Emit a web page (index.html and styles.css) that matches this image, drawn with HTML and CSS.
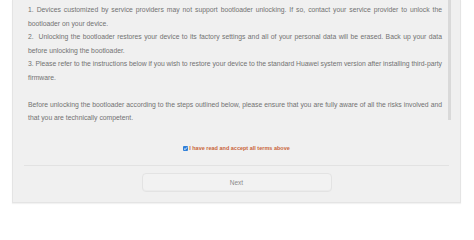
FILE: index.html
```html
<!DOCTYPE html>
<html lang="en">
<head>
<meta charset="utf-8">
<title>Unlock bootloader</title>
<link rel="stylesheet" href="styles.css">
</head>
<body>
<div class="panel">
  <div class="terms">
    <div class="terms-text">
      <p>1. Devices customized by service providers may not support bootloader unlocking. If so, contact your service provider to unlock the bootloader on your device.</p>
      <p>2.&nbsp; Unlocking the bootloader restores your device to its factory settings and all of your personal data will be erased. Back up your data before unlocking the bootloader.</p>
      <p class="tight">3. Please refer to the instructions below if you wish to restore your device to the standard Huawei system version after installing third-party firmware.</p>
      <p class="gap">Before unlocking the bootloader according to the steps outlined below, please ensure that you are fully aware of all the risks involved and that you are technically competent.</p>
    </div>
    <div class="scrollbar"></div>
  </div>
  <label class="agree">
    <span class="check"><svg viewBox="0 0 10 10" width="5" height="5"><path d="M2 5.2 L4.2 7.3 L8 2.8" fill="none" stroke="#fff" stroke-width="1.8"/></svg></span>
    <span class="agree-text">I have read and accept all terms above</span>
  </label>
  <div class="sep"></div>
  <div class="actions">
    <button class="next" type="button">Next</button>
  </div>
</div>
</body>
</html>
```
FILE: styles.css
```css
html, body {
  margin: 0;
  padding: 0;
  background: #ffffff;
}
body {
  font-family: "Liberation Sans", Arial, sans-serif;
  width: 474px;
  height: 211px;
  overflow: hidden;
}
.panel {
  margin: 0 13px 0 12px;
  background: #f0f0f0;
  border: 1px solid #e4e4e4;
  border-top: none;
  box-shadow: 0 1px 1px rgba(0,0,0,0.05);
  padding-bottom: 10px;
  display: flex;
  flex-direction: column;
}
.terms {
  display: flex;
  align-items: flex-start;
  height: 124px;
  overflow: hidden;
}
.terms-text {
  width: 414px;
  padding: 3px 0 0 15px;
  font-size: 6.8px;
  line-height: 13.5px;
  color: #727272;
  text-align: justify;
}
.terms-text p {
  margin: 0;
}
.terms-text p.tight {
  word-spacing: -0.7px;
}
.terms-text p.gap {
  margin-top: 13.5px;
}
.scrollbar {
  margin-left: 6px;
  width: 3px;
  height: 120px;
  background: #d9d9d9;
}
.agree {
  margin-top: 19px;
  height: 10px;
  display: flex;
  align-items: center;
  justify-content: center;
  gap: 1px;
}
.check {
  width: 5px;
  height: 5px;
  background: #2f7fd8;
  border-radius: 1px;
  display: flex;
}
.check svg {
  display: block;
}
.agree-text {
  font-size: 5.5px;
  font-weight: bold;
  color: #c9643a;
}
.sep {
  margin: 12px 11px 0 11px;
  height: 1px;
  background: #e2e2e2;
}
.actions {
  margin-top: 7px;
  display: flex;
  justify-content: center;
}
.next {
  width: 190px;
  height: 19px;
  border: 1px solid #e3e3e3;
  border-radius: 4px;
  background: #f2f2f2;
  box-shadow: inset 0 -1px 1px rgba(0,0,0,0.03);
  font-family: "Liberation Sans", Arial, sans-serif;
  font-size: 6.5px;
  color: #8a8a8a;
  padding: 0;
}
```
